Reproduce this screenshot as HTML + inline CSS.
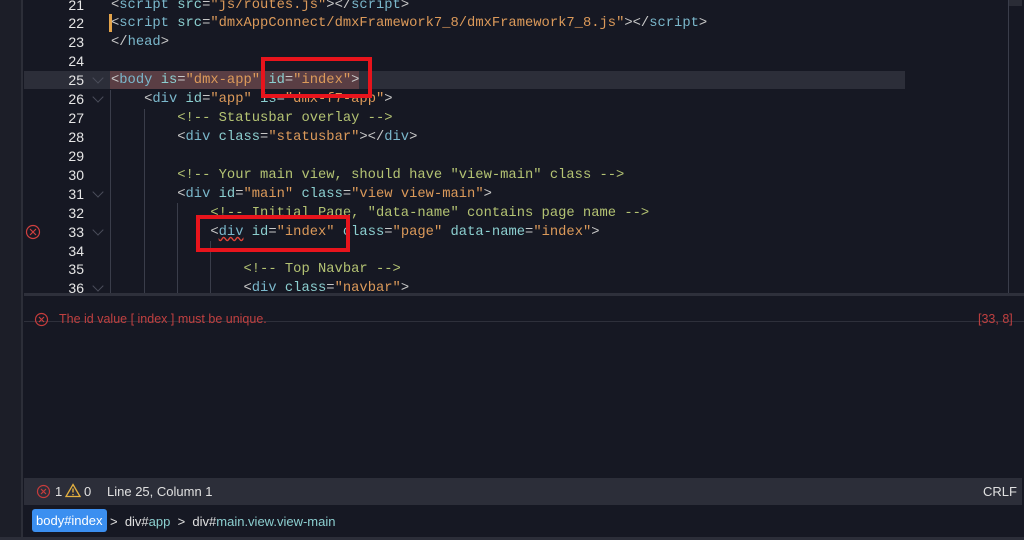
<!DOCTYPE html>
<html><head><meta charset="utf-8"><style>
*{margin:0;padding:0;box-sizing:border-box}
body{width:1024px;height:540px;overflow:hidden;background:#161823;position:relative;font-family:"Liberation Sans",sans-serif}
.abs{position:absolute}
.code{position:absolute;left:0;top:0;width:1008px;height:293px;overflow:hidden}
.ln{position:absolute;left:40px;width:44px;text-align:right;color:#e6e6e6;font:14px "Liberation Sans",sans-serif;height:19px;line-height:19px}
.l{position:absolute;left:111px;white-space:pre;font:13.8px "Liberation Mono",monospace;height:19px;line-height:19px;color:#c8c8c8}
.t{color:#7bb8cc}.a{color:#8ccfd0}.s{color:#dc9a5a}.c{color:#b4c373}.p{color:#c8c8c8}
.g{position:absolute;width:1px;background:#3a3d4a}
.chev{position:absolute;left:94px;width:8px;height:8px;border-right:1px solid #4a4d5a;border-bottom:1px solid #4a4d5a;transform:rotate(45deg)}
.box{position:absolute;border:4px solid #e8141c}
</style></head><body>
<div class="abs" style="left:0;top:0;width:23px;height:540px;background:#1c1e28;border-right:2px solid #2c2e38"></div>
<div class="code">
<div class="abs" style="left:24px;top:71px;width:881px;height:18px;background:#2c2e39"></div>
<div class="abs" style="left:110px;top:71px;width:249px;height:18px;background:#5a3e44"></div>
<div class="abs" style="left:109px;top:14px;width:3px;height:18px;background:#e3a34a"></div>
<div class="g" style="left:110px;top:90px;height:210px"></div>
<div class="g" style="left:144px;top:109px;height:190px"></div>
<div class="g" style="left:177px;top:203px;height:100px"></div>
<div class="g" style="left:210px;top:241px;height:60px"></div>
<div class="g" style="left:243px;top:297px;height:10px"></div>

<div class="ln" style="top:-4px">21</div><div class="l" style="top:-4px"><span class="p">&lt;</span><span class="t">script</span> <span class="a">src</span>=<span class="s">"js/routes.js"</span>&gt;&lt;/<span class="t">script</span>&gt;</div>
<div class="ln" style="top:14px">22</div><div class="l" style="top:14px">&lt;<span class="t">script</span> <span class="a">src</span>=<span class="s">"dmxAppConnect/dmxFramework7_8/dmxFramework7_8.js"</span>&gt;&lt;/<span class="t">script</span>&gt;</div>
<div class="ln" style="top:33px">23</div><div class="l" style="top:33px">&lt;/<span class="t">head</span>&gt;</div>
<div class="ln" style="top:52px">24</div>
<div class="ln" style="top:71px">25</div><div class="chev" style="top:74px"></div><div class="l" style="top:71px">&lt;<span class="t">body</span> <span class="a">is</span>=<span class="s">"dmx-app"</span> <span class="a">id</span>=<span class="s">"index"</span>&gt;</div>
<div class="ln" style="top:90px">26</div><div class="chev" style="top:93px"></div><div class="l" style="top:90px">    &lt;<span class="t">div</span> <span class="a">id</span>=<span class="s">"app"</span> <span class="a">is</span>=<span class="s">"dmx-f7-app"</span>&gt;</div>
<div class="ln" style="top:109px">27</div><div class="l" style="top:109px">        <span class="c">&lt;!-- Statusbar overlay --&gt;</span></div>
<div class="ln" style="top:128px">28</div><div class="l" style="top:128px">        &lt;<span class="t">div</span> <span class="a">class</span>=<span class="s">"statusbar"</span>&gt;&lt;/<span class="t">div</span>&gt;</div>
<div class="ln" style="top:147px">29</div>
<div class="ln" style="top:166px">30</div><div class="l" style="top:166px">        <span class="c">&lt;!-- Your main view, should have "view-main" class --&gt;</span></div>
<div class="ln" style="top:185px">31</div><div class="chev" style="top:188px"></div><div class="l" style="top:185px">        &lt;<span class="t">div</span> <span class="a">id</span>=<span class="s">"main"</span> <span class="a">class</span>=<span class="s">"view view-main"</span>&gt;</div>
<div class="ln" style="top:204px">32</div><div class="l" style="top:204px">            <span class="c">&lt;!-- Initial Page, "data-name" contains page name --&gt;</span></div>
<div class="ln" style="top:223px">33</div><div class="chev" style="top:226px"></div><div class="l" style="top:223px">            &lt;<span class="t" style="text-decoration:underline wavy #e0443a">div</span> <span class="a">id</span>=<span class="s">"index"</span> <span class="a">class</span>=<span class="s">"page"</span> <span class="a">data-name</span>=<span class="s">"index"</span>&gt;</div>
<div class="ln" style="top:242px">34</div>
<div class="ln" style="top:260px">35</div><div class="l" style="top:260px">                <span class="c">&lt;!-- Top Navbar --&gt;</span></div>
<div class="ln" style="top:279px">36</div><div class="chev" style="top:282px"></div><div class="l" style="top:279px">                &lt;<span class="t">div</span> <span class="a">class</span>=<span class="s">"navbar"</span>&gt;</div>
<svg class="abs" style="left:25px;top:224px" width="16" height="16"><circle cx="8" cy="8" r="6.5" fill="none" stroke="#d04040" stroke-width="1.2"/><path d="M5 5L11 11M11 5L5 11" stroke="#d04040" stroke-width="1.2"/></svg>
</div>
<div class="abs" style="left:1008px;top:0;width:1px;height:293px;background:#3a3d4a"></div>
<div class="abs" style="left:1009px;top:0;width:13px;height:6px;background:#2a2c36"></div>
<div class="abs" style="left:24px;top:293px;width:1000px;height:3px;background:#2e303b"></div>
<div class="abs" style="left:24px;top:321px;width:1000px;height:1px;background:#2e303b"></div>
<svg class="abs" style="left:34px;top:312px" width="15" height="15"><circle cx="7.5" cy="7.5" r="6" fill="none" stroke="#c83c3c" stroke-width="1.2"/><path d="M5 5L10 10M10 5L5 10" stroke="#c83c3c" stroke-width="1.2"/></svg>
<div class="abs" style="left:59px;top:312px;font-size:12.5px;color:#c04040">The id value [ index ] must be unique.</div>
<div class="abs" style="left:978px;top:312px;font-size:12.5px;color:#c04040">[33, 8]</div>
<div class="abs" style="left:24px;top:478px;width:998px;height:27px;background:#2c2e39"></div>
<svg class="abs" style="left:36px;top:484px" width="15" height="15"><circle cx="7.5" cy="7.5" r="6" fill="none" stroke="#c83c3c" stroke-width="1.2"/><path d="M5 5L10 10M10 5L5 10" stroke="#c83c3c" stroke-width="1.2"/></svg>
<div class="abs" style="left:55px;top:484px;font-size:13px;color:#e0e0e0">1</div>
<svg class="abs" style="left:65px;top:483px" width="16" height="15"><path d="M8 1.5L15 13.5H1Z" fill="none" stroke="#e3b040" stroke-width="1.3"/><path d="M8 5.5V9.5M8 11V12.3" stroke="#e3b040" stroke-width="1.4"/></svg>
<div class="abs" style="left:84px;top:484px;font-size:13px;color:#e0e0e0">0</div>
<div class="abs" style="left:107px;top:484px;font-size:13px;color:#e0e0e0">Line 25, Column 1</div>
<div class="abs" style="left:983px;top:484px;font-size:13px;color:#e0e0e0">CRLF</div>
<div class="abs" style="left:32px;top:509px;width:75px;height:23px;background:#3b8ff0;border-radius:3px;color:#fff;font-size:13px;line-height:23px;padding-left:4px">body#index</div>
<div class="abs" style="left:110px;top:514px;font-size:13px;color:#e0e0e0">&gt; &nbsp;div#<span style="color:#8ccfd0">app</span> &nbsp;&gt; &nbsp;div#<span style="color:#8ccfd0">main.view.view-main</span></div>
<div class="abs" style="left:0;top:537px;width:1024px;height:3px;background:#2c2e39"></div>
<div class="box" style="left:261px;top:57px;width:111px;height:41px"></div>
<div class="box" style="left:196px;top:215px;width:154px;height:37px"></div>
</body></html>
